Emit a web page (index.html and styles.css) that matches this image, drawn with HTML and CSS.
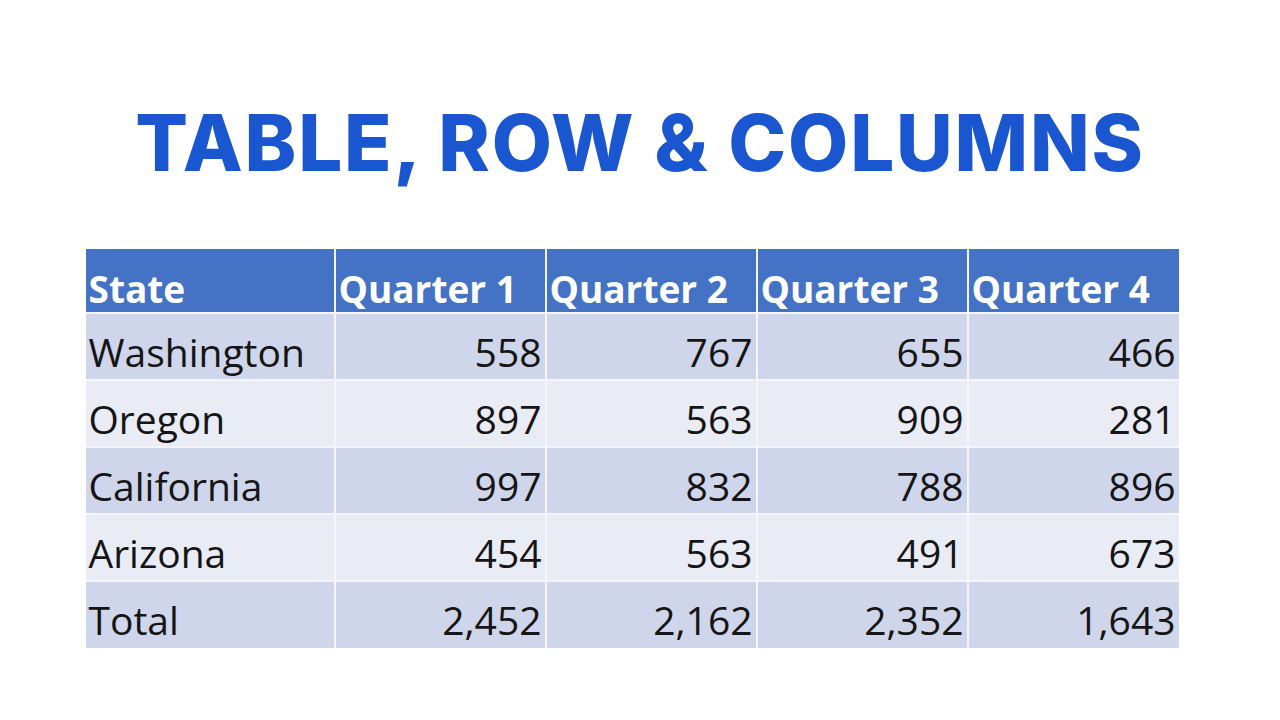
FILE: index.html
```html
<!DOCTYPE html>
<html>
<head>
<meta charset="utf-8">
<link rel="stylesheet" href="styles.css">
</head>
<body>
<main class="page">
  <h1 class="title">TABLE, ROW &amp; COLUMNS</h1>
  <table class="data">
    <thead>
      <tr><th class="state">State</th><th>Quarter 1</th><th>Quarter 2</th><th>Quarter 3</th><th>Quarter 4</th></tr>
    </thead>
    <tbody>
      <tr class="odd"><td class="state">Washington</td><td>558</td><td>767</td><td>655</td><td>466</td></tr>
      <tr class="even"><td class="state">Oregon</td><td>897</td><td>563</td><td>909</td><td>281</td></tr>
      <tr class="odd"><td class="state">California</td><td>997</td><td>832</td><td>788</td><td>896</td></tr>
      <tr class="even"><td class="state">Arizona</td><td>454</td><td>563</td><td>491</td><td>673</td></tr>
      <tr class="odd"><td class="state">Total</td><td>2,452</td><td>2,162</td><td>2,352</td><td>1,643</td></tr>
    </tbody>
  </table>
</main>
</body>
</html>
```
FILE: styles.css
```css
html, body {
  margin: 0;
  padding: 0;
  background: #ffffff;
}
.page {
  width: 1280px;
  height: 720px;
  display: flex;
  flex-direction: column;
  align-items: center;
  overflow: hidden;
}
.title {
  margin: 95px 0 0 0;
  font-family: "Inter", "Liberation Sans", sans-serif;
  font-weight: 800;
  font-size: 78px;
  line-height: 96px;
  color: #1a56d0;
  letter-spacing: 1.8px;
  white-space: nowrap;
}
.data {
  margin: 58px 0 0 -16px;
  border-collapse: collapse;
  font-family: "Open Sans", "Liberation Sans", sans-serif;
}
.data th, .data td {
  border-left: 2px solid #f4f6fb;
  padding: 0 3px 0 3px;
  box-sizing: border-box;
}
.data th:first-child, .data td:first-child {
  border-left: none;
}
.data th {
  background: #4472c4;
  color: #ffffff;
  font-weight: 700;
  font-size: 37px;
  line-height: 40px;
  height: 64px;
  text-align: left;
  vertical-align: top;
  padding-top: 20px;
  width: 211px;
}
.data th.state {
  width: 249px;
}
.data td {
  font-size: 39px;
  line-height: 48px;
  color: #151515;
  height: 67px;
  text-align: right;
  vertical-align: top;
  border-top: 2px solid #f4f6fb;
  padding-top: 14px;
}
.data td.state {
  text-align: left;
}
.odd td {
  background: #cfd5ea;
}
.even td {
  background: #e9ebf5;
}
```
